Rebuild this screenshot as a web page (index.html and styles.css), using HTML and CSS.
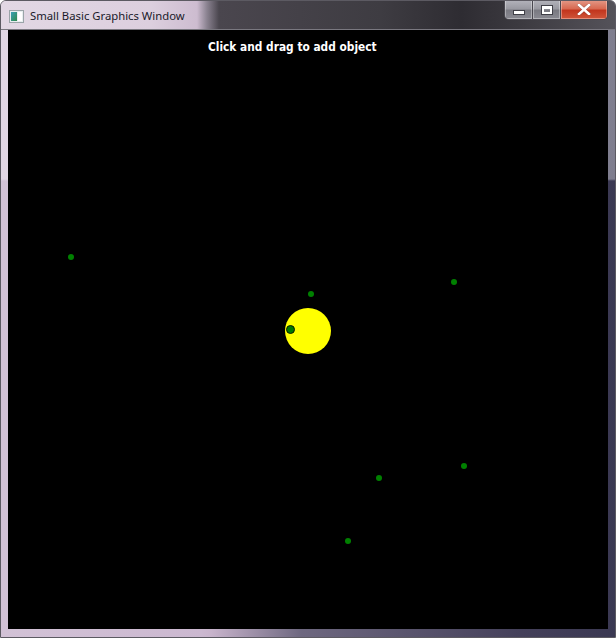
FILE: index.html
```html
<!DOCTYPE html>
<html>
<head>
<meta charset="utf-8">
<link rel="stylesheet" href="styles.css">
</head>
<body>
<div class="window">
  <div class="titlebar">
    <div class="title-left">
      <svg class="app-icon" width="15" height="13" viewBox="0 0 15 13">
        <defs>
          <linearGradient id="ig" x1="0" y1="0" x2="1" y2="1">
            <stop offset="0" stop-color="#3aa0b8"/>
            <stop offset="1" stop-color="#2f8a4a"/>
          </linearGradient>
        </defs>
        <rect x="0.5" y="0.5" width="14" height="12" fill="#e8eef0" stroke="#9aa4a8"/>
        <rect x="2" y="2" width="6" height="9" fill="url(#ig)"/>
        <rect x="9" y="2" width="4" height="9" fill="#ffffff"/>
      </svg>
      <span class="title-text">Small Basic Graphics Window</span>
    </div>
    <div class="caption-buttons">
      <div class="cbtn cbtn-min"><span class="min-glyph"></span></div>
      <div class="cbtn cbtn-max"><span class="max-glyph"></span></div>
      <div class="cbtn cbtn-close">
        <svg width="14" height="11" viewBox="0 0 14 11">
          <path d="M2 1 L12 10 M12 1 L2 10" stroke="#3a2020" stroke-width="3.6" stroke-linecap="square" opacity="0.35"/>
          <path d="M2 1 L12 10 M12 1 L2 10" stroke="#ffffff" stroke-width="2.6" stroke-linecap="square"/>
        </svg>
      </div>
    </div>
  </div>
  <div class="client">
    <div class="hint">Click and drag to add object</div>
    <div class="sun" style="left:277px;top:278px"></div>
    <div class="dot" style="left:60px;top:224px"></div>
    <div class="dot" style="left:300px;top:261px"></div>
    <div class="dot" style="left:443px;top:249px"></div>
    <div class="dot" style="left:368px;top:445px"></div>
    <div class="dot" style="left:453px;top:433px"></div>
    <div class="dot" style="left:337px;top:508px"></div>
    <div class="planet" style="left:278px;top:295px"></div>
  </div>
</div>
</body>
</html>
```

FILE: styles.css
```css
html, body {
  margin: 0;
  padding: 0;
  background: #ffffff;
}

.window {
  width: 616px;
  height: 638px;
  box-sizing: border-box;
  display: flex;
  flex-direction: column;
  padding: 0 7px 8px 7px;
  border-radius: 6px 6px 0 0;
  border: 1px solid #5c5a62;
  background:
    linear-gradient(to bottom, rgba(255,255,255,0.35) 0, rgba(255,255,255,0.35) 178px, rgba(255,255,255,0) 180px),
    linear-gradient(to right, #d2c2d6 0, #cbb8d0 200px, #c8b4cc 210px, #6e6880 300px, #44405a 520px, #3a3852 616px);
  overflow: hidden;
}

.titlebar {
  height: 28px;
  margin: 0 -7px;
  display: flex;
  justify-content: space-between;
  align-items: flex-start;
  background: linear-gradient(to right, #e2d8e4 0, #dccfde 150px, #cdbcd0 196px, #8a8290 206px, #4a464e 218px, #3e3c42 380px, #2e2c32 460px, #3c3a40 520px, #55535a 616px);
  border-bottom: 1px solid #7a7880;
  flex: none;
}

.title-left {
  display: flex;
  align-items: center;
  padding-left: 8px;
  padding-top: 8px;
}

.app-icon {
  display: block;
  margin-right: 6px;
}

.title-text {
  font-family: "Noto Sans", "DejaVu Sans", sans-serif;
  font-size: 11.3px;
  color: #1a1a2a;
  line-height: 14px;
}

.caption-buttons {
  display: flex;
  margin-right: 7px;
  height: 19px;
  margin-top: -1px;
  border: 1px solid #4a4850;
  border-top: none;
  border-radius: 0 0 5px 5px;
  overflow: hidden;
}

.cbtn {
  height: 19px;
  display: flex;
  align-items: center;
  justify-content: center;
}

.cbtn-min, .cbtn-max {
  width: 27px;
  background: linear-gradient(to bottom, #b4b4bc 0, #9a9aa2 45%, #7a7a82 55%, #8a8a92 100%);
  border-right: 1px solid #4a4850;
  box-shadow: inset 0 0 0 1px rgba(255,255,255,0.35);
}

.cbtn-close {
  width: 46px;
  background: linear-gradient(to bottom, #e49a88 0, #d86a52 45%, #c2361e 55%, #d0563a 100%);
  box-shadow: inset 0 0 0 1px rgba(255,210,200,0.45);
}

.min-glyph {
  display: block;
  width: 10px;
  height: 3px;
  margin-top: 5px;
  background: #ffffff;
  border: 1px solid #404048;
}

.max-glyph {
  display: block;
  width: 6px;
  height: 3px;
  border: 2px solid #ffffff;
  border-top-width: 3px;
  outline: 1px solid #404048;
}

.client {
  flex: 1;
  position: relative;
  background: #000000;
  overflow: hidden;
}

.hint {
  position: absolute;
  left: 200px;
  top: 10px;
  font-family: "DejaVu Sans Condensed", "DejaVu Sans", sans-serif;
  font-stretch: condensed;
  font-weight: bold;
  font-size: 11.8px;
  color: #ffffff;
  white-space: nowrap;
}

.sun {
  position: absolute;
  width: 46px;
  height: 46px;
  border-radius: 50%;
  background: #ffff00;
}

.dot {
  position: absolute;
  width: 6px;
  height: 6px;
  border-radius: 50%;
  background: #008000;
}

.planet {
  position: absolute;
  width: 7px;
  height: 7px;
  border-radius: 50%;
  background: #007a00;
  border: 1.5px solid #0a1a00;
}
```
